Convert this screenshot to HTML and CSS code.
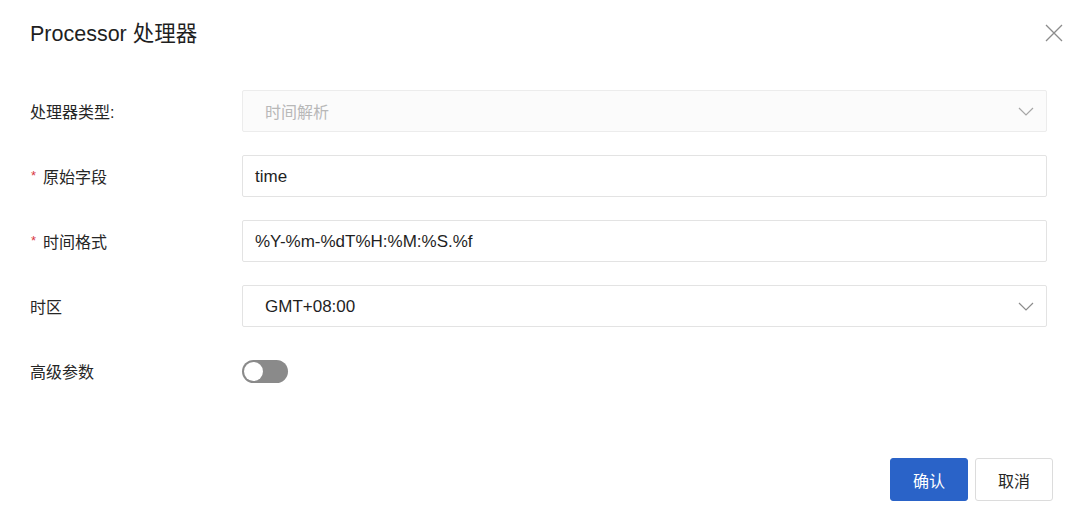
FILE: index.html
```html
<!DOCTYPE html>
<html lang="zh-CN">
<head>
<meta charset="utf-8">
<title>Processor 处理器</title>
<link rel="stylesheet" href="styles.css">
</head>
<body>
<div class="dialog">
  <header class="dialog-header">
    <h1 class="dialog-title">Processor 处理器</h1>
    <button class="close-btn" aria-label="关闭">
      <svg width="18" height="18" viewBox="0 0 18 18"><path d="M1 1 L17 17 M17 1 L1 17" stroke="#8c8c8c" stroke-width="1.3" fill="none"/></svg>
    </button>
  </header>
  <form class="form">
    <div class="row">
      <label class="label">处理器类型:</label>
      <div class="field select disabled">
        <span class="value cjk">时间解析</span>
        <svg class="chevron" width="16" height="9" viewBox="0 0 16 9"><path d="M1 1 L8 8 L15 1" stroke="#a6a6a6" stroke-width="1.2" fill="none"/></svg>
      </div>
    </div>
    <div class="row">
      <label class="label"><span class="req">*</span>原始字段</label>
      <div class="field input"><span class="value latin">time</span></div>
    </div>
    <div class="row">
      <label class="label"><span class="req">*</span>时间格式</label>
      <div class="field input"><span class="value latin">%Y-%m-%dT%H:%M:%S.%f</span></div>
    </div>
    <div class="row">
      <label class="label">时区</label>
      <div class="field select">
        <span class="value latin">GMT+08:00</span>
        <svg class="chevron" width="16" height="9" viewBox="0 0 16 9"><path d="M1 1 L8 8 L15 1" stroke="#8c8c8c" stroke-width="1.2" fill="none"/></svg>
      </div>
    </div>
    <div class="row">
      <label class="label">高级参数</label>
      <div class="switch"><span class="knob"></span></div>
    </div>
  </form>
  <footer class="footer">
    <button class="btn primary">确认</button>
    <button class="btn">取消</button>
  </footer>
</div>
</body>
</html>
```

FILE: styles.css
```css
* { box-sizing: border-box; }
html, body { margin: 0; padding: 0; background: #fff; }
body {
  font-family: "Liberation Sans", "Noto Sans CJK SC", sans-serif;
  color: #262626;
  width: 1080px;
  height: 522px;
  overflow: hidden;
}
.dialog { display: flex; flex-direction: column; }
.dialog-header {
  height: 62px;
  display: flex;
  align-items: center;
  justify-content: space-between;
  padding: 0 17px 0 30px;
}
.dialog-title {
  margin: 0;
  font-size: 21.5px;
  font-weight: normal;
  color: #1f1f1f;
}
.close-btn {
  border: 0;
  background: none;
  padding: 0;
  width: 18px;
  height: 18px;
  display: flex;
  margin-top: 3px;
}
.form {
  margin: 28px 0 0;
  padding: 0 33px 0 30px;
  display: flex;
  flex-direction: column;
  gap: 23px;
}
.row {
  height: 42px;
  display: grid;
  grid-template-columns: 212px 1fr;
  align-items: center;
}
.label {
  font-size: 16px;
  color: #262626;
  display: flex;
  align-items: center;
}
.req {
  color: #d8373f;
  font-size: 13px;
  width: 12px;
  margin-left: 1px;
  margin-top: -2px;
}
.field {
  height: 42px;
  border: 1px solid #e3e3e3;
  border-radius: 2px;
  background: #fff;
  display: flex;
  align-items: center;
  justify-content: space-between;
  padding: 0 12px 0 12px;
}
.field.select { padding-left: 22px; }
.field.disabled { background: #fbfbfb; border-color: #ececec; }
.value.latin { font-size: 17px; color: #1f1f1f; margin-top: 2px; }
.value.cjk { font-size: 16px; color: #b8b8b8; }
.chevron { display: block; }
.switch {
  width: 46px;
  height: 23px;
  border-radius: 12px;
  background: #8a8a8a;
  position: relative;
}
.knob {
  position: absolute;
  left: 2px;
  top: 2px;
  width: 19px;
  height: 19px;
  border-radius: 50%;
  background: #fff;
}
.footer {
  margin-top: 66px;
  display: flex;
  justify-content: flex-end;
  gap: 7px;
  padding-right: 27px;
}
.btn {
  width: 78px;
  height: 43px;
  border: 1px solid #dcdcdc;
  border-radius: 3px;
  background: #fff;
  font-family: "Liberation Sans", "Noto Sans CJK SC", sans-serif;
  font-size: 16px;
  color: #262626;
  padding: 0;
}
.btn.primary {
  background: #2a63c8;
  border-color: #2a63c8;
  color: #fff;
}
```
